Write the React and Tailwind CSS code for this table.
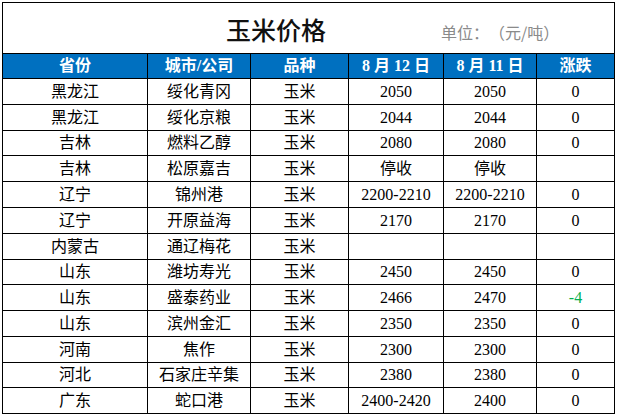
import React from "react";

const rows = [
  ["黑龙江", "绥化青冈", "玉米", "2050", "2050", "0", 25],
  ["黑龙江", "绥化京粮", "玉米", "2044", "2044", "0", 25],
  ["吉林", "燃料乙醇", "玉米", "2080", "2080", "0", 24],
  ["吉林", "松原嘉吉", "玉米", "停收", "停收", "", 25],
  ["辽宁", "锦州港", "玉米", "2200-2210", "2200-2210", "0", 25],
  ["辽宁", "开原益海", "玉米", "2170", "2170", "0", 25],
  ["内蒙古", "通辽梅花", "玉米", "", "", "", 25],
  ["山东", "潍坊寿光", "玉米", "2450", "2450", "0", 24],
  ["山东", "盛泰药业", "玉米", "2466", "2470", "-4", 25],
  ["山东", "滨州金汇", "玉米", "2350", "2350", "0", 25],
  ["河南", "焦作", "玉米", "2300", "2300", "0", 25],
  ["河北", "石家庄辛集", "玉米", "2380", "2380", "0", 24],
  ["广东", "蛇口港", "玉米", "2400-2420", "2400", "0", 25],
];

const headers = ["省份", "城市/公司", "品种", "8 月 12 日", "8 月 11 日", "涨跌"];

export default function App() {
  return (
    <div className="pt-[2px] pl-[2px] font-['Liberation_Serif','Noto_Sans_CJK_SC',serif]">
      <div className="grid w-[613px] grid-cols-[144px_102px_97px_94px_92px_77px] gap-px bg-black p-px">
        <div className="col-span-6 flex h-[50px] items-center bg-white [text-spacing-trim:space-all]">
          <span className="ml-[223px] mt-[2px] font-['Noto_Sans_CJK_SC',sans-serif] text-[25px] font-medium leading-none text-[#111]">
            玉米价格
          </span>
          <span className="ml-[115px] mt-[7px] font-['Noto_Sans_CJK_SC',sans-serif] text-[16px] leading-none text-[#8a8a8a]">
            单位：（元/吨）
          </span>
        </div>
        {headers.map((h) => (
          <div
            key={h}
            className="flex h-[24px] items-center justify-center bg-[#0070c0] text-[16px] font-bold leading-none text-white"
          >
            {h}
          </div>
        ))}
        {rows.map((r, i) =>
          r.slice(0, 6).map((c, j) => (
            <div
              key={i + "-" + j}
              className={
                (r[6] === 24 ? "h-[24px] " : "h-[25px] ") +
                "flex items-center justify-center bg-white text-[16px] leading-none " +
                (c === "-4" ? "text-[#00b050]" : "text-black")
              }
            >
              {c}
            </div>
          ))
        )}
      </div>
    </div>
  );
}
